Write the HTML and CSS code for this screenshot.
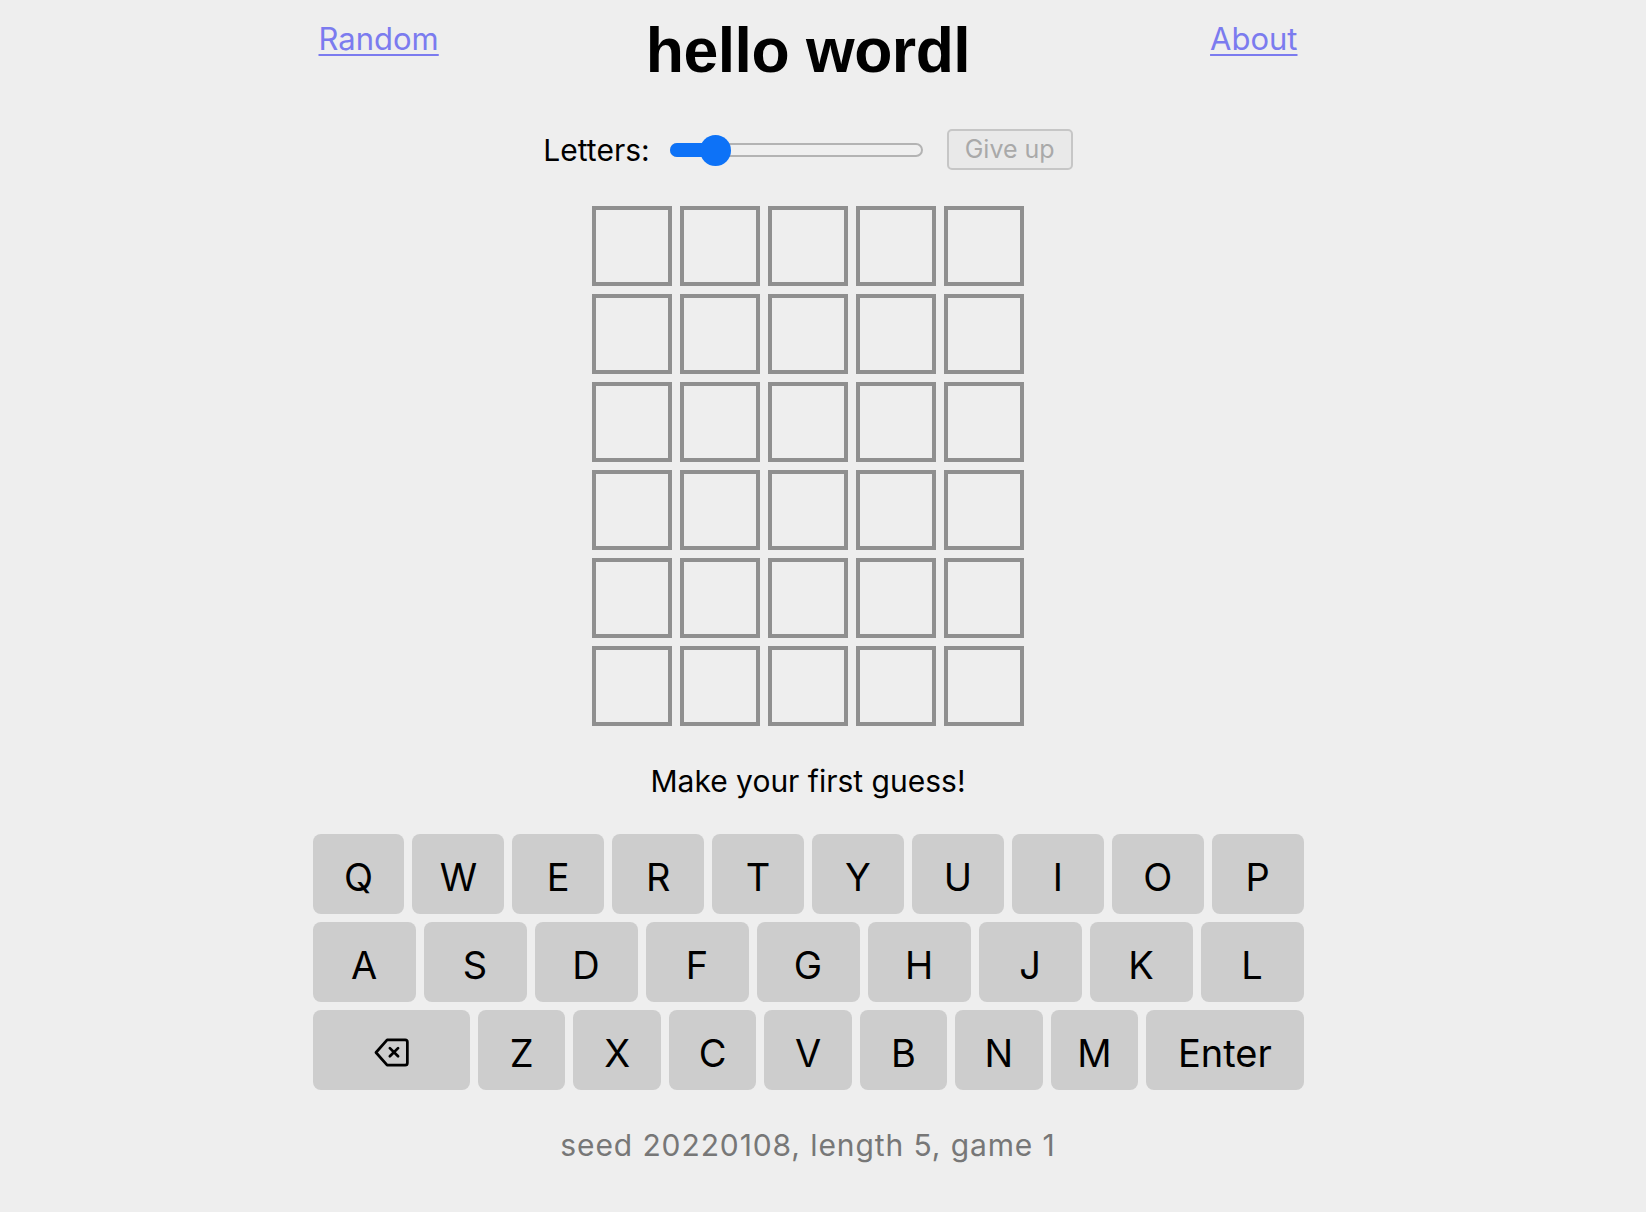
FILE: index.html
```html
<!DOCTYPE html>
<html>
	<head>
		<meta charset="utf-8">
		<title>hello wordl</title>
		<link rel="stylesheet" href="styles.css">
	</head>
	<body>
		<div class="App">
			<div class="App-header">
				<a class="nav-link nav-left" href="#">Random</a>
				<h1>hello wordl</h1>
				<a class="nav-link nav-right" href="#">About</a>
			</div>

			<div class="Game-options">
				<label class="options-label">Letters:</label>
				<div class="slider">
					<div class="slider-fill" style="width: 44px;"></div>
					<div class="slider-thumb" style="left: 28px;"></div>
				</div>
				<button class="give-up" disabled>Give up</button>
			</div>

			<div class="Game-rows">
				<div class="Row-letter"></div><div class="Row-letter"></div><div class="Row-letter"></div><div class="Row-letter"></div><div class="Row-letter"></div>
				<div class="Row-letter"></div><div class="Row-letter"></div><div class="Row-letter"></div><div class="Row-letter"></div><div class="Row-letter"></div>
				<div class="Row-letter"></div><div class="Row-letter"></div><div class="Row-letter"></div><div class="Row-letter"></div><div class="Row-letter"></div>
				<div class="Row-letter"></div><div class="Row-letter"></div><div class="Row-letter"></div><div class="Row-letter"></div><div class="Row-letter"></div>
				<div class="Row-letter"></div><div class="Row-letter"></div><div class="Row-letter"></div><div class="Row-letter"></div><div class="Row-letter"></div>
				<div class="Row-letter"></div><div class="Row-letter"></div><div class="Row-letter"></div><div class="Row-letter"></div><div class="Row-letter"></div>
			</div>

			<p class="Game-message">Make your first guess!</p>

			<div class="Game-keyboard">
				<div class="Game-keyboard-row">
					<div class="key">Q</div><div class="key">W</div><div class="key">E</div><div class="key">R</div><div class="key">T</div>
					<div class="key">Y</div><div class="key">U</div><div class="key">I</div><div class="key">O</div><div class="key">P</div>
				</div>
				<div class="Game-keyboard-row">
					<div class="key">A</div><div class="key">S</div><div class="key">D</div><div class="key">F</div><div class="key">G</div>
					<div class="key">H</div><div class="key">J</div><div class="key">K</div><div class="key">L</div>
				</div>
				<div class="Game-keyboard-row">
					<div class="key key-wide">
						<svg class="backspace-icon" width="35" height="29" viewBox="0 0 32 26">
							<path d="M12 1.5 H28.5 Q30.5 1.5 30.5 3.5 V22.5 Q30.5 24.5 28.5 24.5 H12 L1.8 13 Z" fill="none" stroke="#000" stroke-width="2.5" stroke-linejoin="round"/>
							<path d="M14.5 9 L22 16.5 M22 9 L14.5 16.5" fill="none" stroke="#000" stroke-width="2.5" stroke-linecap="round"/>
						</svg>
					</div>
					<div class="key">Z</div><div class="key">X</div><div class="key">C</div><div class="key">V</div>
					<div class="key">B</div><div class="key">N</div><div class="key">M</div>
					<div class="key key-wide">Enter</div>
				</div>
			</div>

			<div class="Game-seed-info">seed 20220108, length 5, game 1</div>
		</div>
	</body>
</html>
```

FILE: styles.css
```css
body {
    margin: 0;
    padding: 0 30px 0 0;
    background-color: #eeeeee;
    font-family: Inter, "Noto Sans", sans-serif;
    color: #000;
}

div.App {
    width: 991px;
    margin: 0 auto;
    text-align: center;
}

div.App-header {
    display: grid;
    grid-template-columns: 1fr auto 1fr;
    align-items: start;
    padding-top: 19px;
}

div.App-header h1 {
    margin: 0;
    font-family: "Liberation Sans", Arial, sans-serif;
    font-weight: bold;
    font-size: 62.5px;
    line-height: 62px;
    letter-spacing: -0.5px;
}

a.nav-link {
    font-size: 31px;
    line-height: 38px;
    padding-top: 1px;
    color: #7b7bef;
    text-decoration: underline;
    text-decoration-thickness: 2px;
    text-underline-offset: 4px;
}

a.nav-left {
    justify-self: start;
    margin-left: 6px;
}

a.nav-right {
    justify-self: end;
    margin-right: 6px;
}

div.Game-options {
    display: flex;
    align-items: center;
    justify-content: center;
    height: 42px;
    margin-top: 48px;
}

label.options-label {
    font-size: 30px;
    margin-right: 20px;
}

div.slider {
    position: relative;
    width: 253px;
    height: 14px;
    box-sizing: border-box;
    border: 2px solid #b3b3b3;
    border-radius: 7px;
    background-color: #efefef;
    margin-right: 24px;
}

div.slider-fill {
    position: absolute;
    left: -2px;
    top: -2px;
    height: 14px;
    border-radius: 7px 0 0 7px;
    background-color: #0d72f7;
}

div.slider-thumb {
    position: absolute;
    top: -10.5px;
    width: 31px;
    height: 31px;
    border-radius: 50%;
    background-color: #0d72f7;
}

button.give-up {
    width: 126px;
    height: 41px;
    box-sizing: border-box;
    border: 2px solid #c6c6c6;
    border-radius: 5px;
    background-color: #e9e9e9;
    color: #a9a9a9;
    font-family: Inter, "Noto Sans", sans-serif;
    font-size: 25px;
    padding: 0;
    margin-top: -2px;
}

div.Game-rows {
    display: grid;
    grid-template-columns: repeat(5, 80px);
    grid-auto-rows: 80px;
    gap: 8px;
    justify-content: center;
    margin-top: 35px;
}

div.Row-letter {
    box-sizing: border-box;
    border: 4px solid #8f8f8f;
}

p.Game-message {
    margin: 37px 0 0;
    font-size: 30px;
}

div.Game-keyboard {
    display: flex;
    flex-direction: column;
    gap: 8px;
    margin-top: 35px;
}

div.Game-keyboard-row {
    display: flex;
    gap: 8px;
}

div.key {
    flex: 1 1 0;
    height: 80px;
    box-sizing: border-box;
    padding-top: 6px;
    display: flex;
    align-items: center;
    justify-content: center;
    background-color: #cdcdcd;
    border-radius: 8px;
    font-size: 38px;
}

div.key-wide {
    flex: 1.8 1 0;
}

svg.backspace-icon {
    margin-top: -2px;
}

div.Game-seed-info {
    margin-top: 37px;
    font-size: 30px;
    letter-spacing: 0.9px;
    color: #777777;
}
```
